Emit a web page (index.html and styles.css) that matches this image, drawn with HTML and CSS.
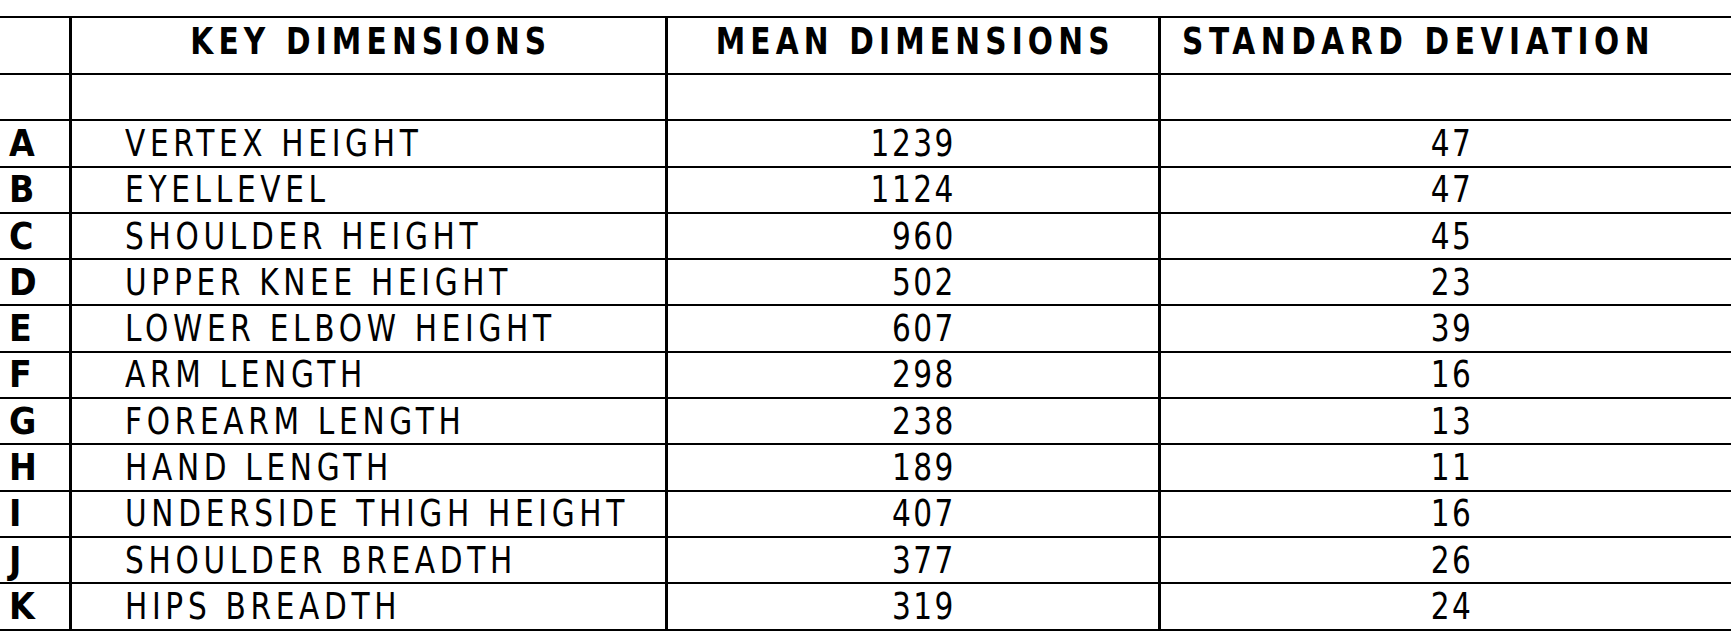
FILE: index.html
```html
<!DOCTYPE html>
<html lang="en">
<head>
<meta charset="utf-8">
<title>Key Dimensions</title>
<link rel="stylesheet" href="styles.css">
</head>
<body>
<table class="dims">
  <colgroup>
    <col class="c-key">
    <col class="c-name">
    <col class="c-mean">
    <col class="c-sd">
  </colgroup>
  <thead>
    <tr class="head">
      <th></th>
      <th class="h-center"><span class="t">KEY DIMENSIONS</span></th>
      <th class="h-center"><span class="t">MEAN DIMENSIONS</span></th>
      <th class="h-left"><span class="t">STANDARD DEVIATION</span></th>
    </tr>
  </thead>
  <tbody>
    <tr class="blank"><td></td><td></td><td></td><td></td></tr>
    <tr><td class="key">A</td><td class="name"><span class="t">VERTEX HEIGHT</span></td><td class="mean"><span class="t">1239</span></td><td class="sd"><span class="t">47</span></td></tr>
    <tr><td class="key">B</td><td class="name"><span class="t">EYELLEVEL</span></td><td class="mean"><span class="t">1124</span></td><td class="sd"><span class="t">47</span></td></tr>
    <tr><td class="key">C</td><td class="name"><span class="t">SHOULDER HEIGHT</span></td><td class="mean"><span class="t">960</span></td><td class="sd"><span class="t">45</span></td></tr>
    <tr><td class="key">D</td><td class="name"><span class="t">UPPER KNEE HEIGHT</span></td><td class="mean"><span class="t">502</span></td><td class="sd"><span class="t">23</span></td></tr>
    <tr><td class="key">E</td><td class="name"><span class="t">LOWER ELBOW HEIGHT</span></td><td class="mean"><span class="t">607</span></td><td class="sd"><span class="t">39</span></td></tr>
    <tr><td class="key">F</td><td class="name"><span class="t">ARM LENGTH</span></td><td class="mean"><span class="t">298</span></td><td class="sd"><span class="t">16</span></td></tr>
    <tr><td class="key">G</td><td class="name"><span class="t">FOREARM LENGTH</span></td><td class="mean"><span class="t">238</span></td><td class="sd"><span class="t">13</span></td></tr>
    <tr><td class="key">H</td><td class="name"><span class="t">HAND LENGTH</span></td><td class="mean"><span class="t">189</span></td><td class="sd"><span class="t">11</span></td></tr>
    <tr><td class="key">I</td><td class="name"><span class="t">UNDERSIDE THIGH HEIGHT</span></td><td class="mean"><span class="t">407</span></td><td class="sd"><span class="t">16</span></td></tr>
    <tr><td class="key">J</td><td class="name"><span class="t">SHOULDER BREADTH</span></td><td class="mean"><span class="t">377</span></td><td class="sd"><span class="t">26</span></td></tr>
    <tr><td class="key">K</td><td class="name"><span class="t">HIPS BREADTH</span></td><td class="mean"><span class="t">319</span></td><td class="sd"><span class="t">24</span></td></tr>
  </tbody>
</table>
</body>
</html>
```

FILE: styles.css
```css
html, body {
  margin: 0;
  padding: 0;
  background: #ffffff;
}

body {
  padding-top: 16px;
  font-family: "DejaVu Sans Condensed", "DejaVu Sans", sans-serif;
  font-stretch: condensed;
  color: #000000;
}

.dims {
  width: 1731px;
  border-collapse: collapse;
  table-layout: fixed;
  font-size: 37px;
}

.c-key { width: 70px; }
.c-name { width: 596px; }
.c-mean { width: 493px; }
.c-sd { width: 572px; }

.dims th,
.dims td {
  padding: 0;
  border-top: 2px solid #000;
  border-bottom: 2px solid #000;
  border-left: 3px solid #000;
  line-height: 1;
  vertical-align: middle;
  white-space: nowrap;
  overflow: visible;
}

.dims th:first-child,
.dims td:first-child {
  border-left: none;
}

/* narrow, tall lettering of the original chart */
.t {
  display: inline-block;
  transform: scaleX(0.89);
}

.head th {
  height: 57px;
  font-weight: bold;
  padding-bottom: 9px;
  box-sizing: border-box;
}

.head .t {
  letter-spacing: 5.8px;
}

.h-center {
  text-align: center;
}

.h-center .t {
  transform-origin: center;
  margin-right: -5.8px;
}

.h-left {
  text-align: left;
  padding-left: 21px !important;
}

.h-left .t {
  transform-origin: left center;
  letter-spacing: 6.3px;
}

.blank td {
  height: 44px;
}

tbody tr {
  height: 46.3px;
}

.key {
  font-weight: bold;
  padding-left: 9px !important;
  text-align: left;
}

.name {
  text-align: left;
  padding-left: 53px !important;
}

.name .t {
  transform-origin: left center;
  letter-spacing: 5.25px;
}

.mean {
  text-align: right;
  padding-right: 202px !important;
}

.mean .t {
  transform-origin: right center;
  letter-spacing: 2.8px;
}

.sd {
  text-align: center;
}

.sd .t {
  transform-origin: center;
  letter-spacing: 2.8px;
  margin-left: 12px;
}
```
